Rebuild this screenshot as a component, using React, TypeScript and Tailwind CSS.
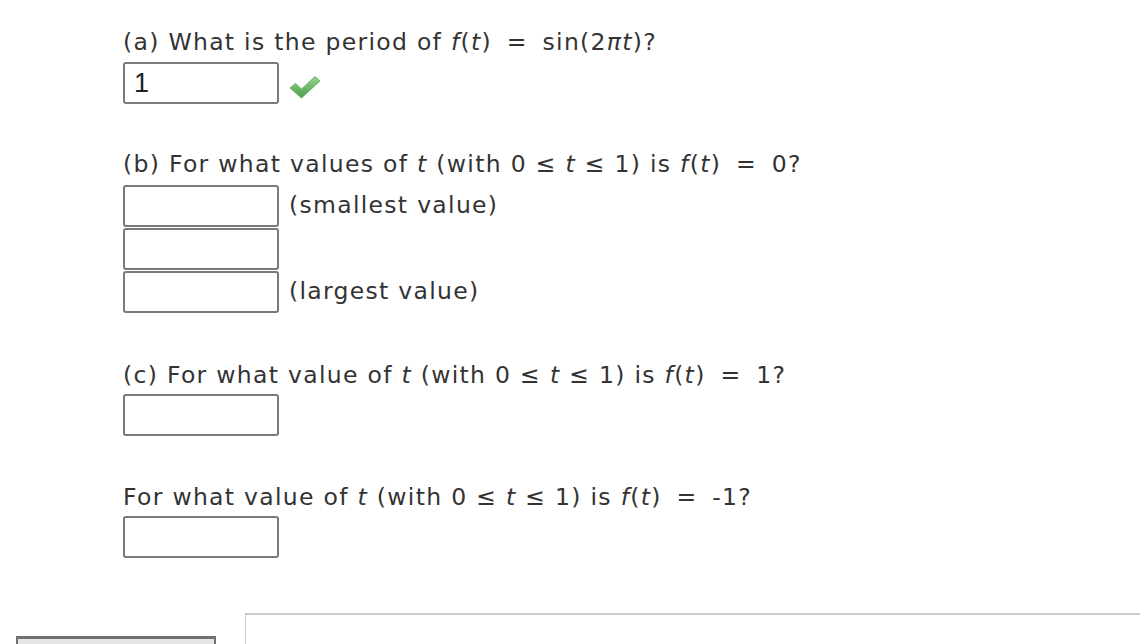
import React from "react";

const font = { fontFamily: "Verdana, 'DejaVu Sans', sans-serif" };

function I({ children }: { children: React.ReactNode }) {
  return <span className="italic">{children}</span>;
}

function Eq() {
  return <span className="mx-[6px]">=</span>;
}

function Box({ value }: { value?: string }) {
  return (
    <div className="flex h-[42px] w-[156px] items-center rounded-[3px] border-2 border-[#7a7a7a] bg-white px-[9px] text-[27px] tracking-normal text-[#222]" style={{ fontFamily: "'Liberation Sans', Arial, sans-serif" }}>
      {value}
    </div>
  );
}

function Check() {
  return (
    <svg width="32" height="24" viewBox="0 0 32 24" className="ml-[10px] mt-[13px]">
      <defs>
        <linearGradient id="ck" x1="0" y1="0" x2="0" y2="1">
          <stop offset="0" stopColor="#96d491" />
          <stop offset="1" stopColor="#4b9f47" />
        </linearGradient>
      </defs>
      <path d="M1 13 L6.5 8.5 L12.5 14 L26 1.5 L31 6 L12.5 23 Z" fill="url(#ck)" stroke="#5aa855" strokeWidth="0.8" strokeLinejoin="round" />
    </svg>
  );
}

function Ft() {
  return (
    <>
      <I>f</I>(<I>t</I>)
    </>
  );
}

export default function App() {
  return (
    <div className="relative h-[644px] w-[1140px] overflow-hidden bg-white text-[23.5px] tracking-[1.3px] text-[#333]" style={font}>
      <div className="flex flex-col pl-[123px] pt-[25px]">
        <div className="leading-[34px]">
          (a) What is the period of <Ft /> <Eq /> sin(2<I>π</I><I>t</I>)?
        </div>
        <div className="mt-[3px] flex items-start">
          <Box value="1" />
          <Check />
        </div>

        <div className="mt-[43px] leading-[34px]">
          (b) For what values of <I>t</I> (with 0 ≤ <I>t</I> ≤ 1) is <Ft /> <Eq /> 0?
        </div>
        <div className="mt-[4px] flex flex-col gap-[1px]">
          <div className="flex items-center gap-[10px]">
            <Box />
            <span>(smallest value)</span>
          </div>
          <div className="flex items-center gap-[10px]">
            <Box />
          </div>
          <div className="flex items-center gap-[10px]">
            <Box />
            <span>(largest value)</span>
          </div>
        </div>

        <div className="mt-[45px] leading-[34px]">
          (c) For what value of <I>t</I> (with 0 ≤ <I>t</I> ≤ 1) is <Ft /> <Eq /> 1?
        </div>
        <div className="mt-[2px]">
          <Box />
        </div>

        <div className="mt-[44px] leading-[34px]">
          For what value of <I>t</I> (with 0 ≤ <I>t</I> ≤ 1) is <Ft /> <Eq /> -1?
        </div>
        <div className="mt-[2px]">
          <Box />
        </div>
      </div>

      <div className="absolute left-[16px] top-[636px] h-[20px] w-[200px] border-x-2 border-t-[3px] border-[#707070] bg-[#e6e6e6]" />
      <div className="absolute left-[245px] top-[613px] h-[40px] w-[900px] border-l border-t-2 border-[#cccccc] bg-white" />
    </div>
  );
}
